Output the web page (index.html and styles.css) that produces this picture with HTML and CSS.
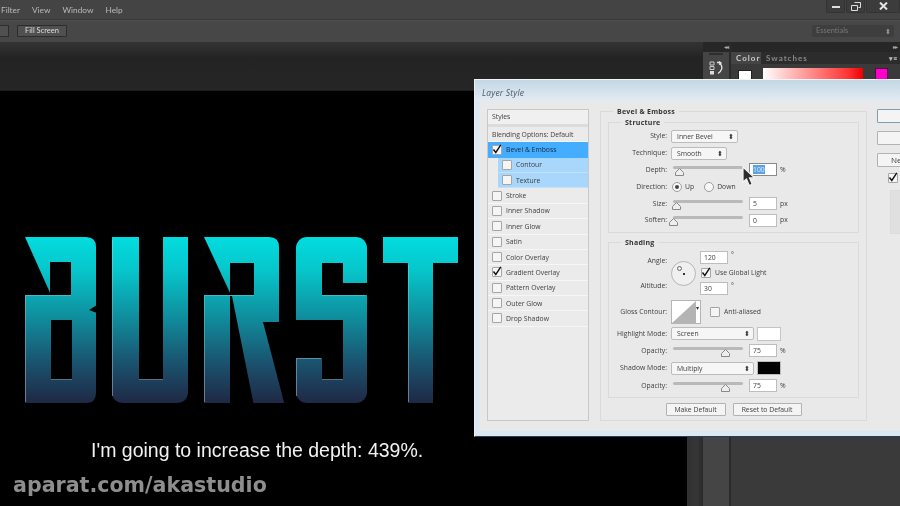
FILE: index.html
```html
<!DOCTYPE html>
<html lang="en">
<head>
<meta charset="utf-8">
<title>Layer Style</title>
<link rel="stylesheet" href="styles.css">
</head>
<body>
<div class="app">
  <header class="menubar">
    <nav class="menus"><span>Filter</span><span>View</span><span>Window</span><span>Help</span></nav>
    <div class="winctl">
      <span class="winbtn w-min"><svg width="8" height="3"><rect width="8" height="2" y="1" fill="#ddd"/></svg></span>
      <span class="winbtn w-res"><svg width="10" height="9" viewBox="0 0 10 9"><path d="M3.5.5h6v5h-2M.5 3.500h6v5h-6z" fill="none" stroke="#ddd"/></svg></span>
      <span class="winbtn w-close"><svg width="9" height="8" viewBox="0 0 9 8"><path d="M1 .5l7 7M8 .5l-7 7" stroke="#e4e4e4" stroke-width="2"/></svg></span>
    </div>
  </header>
  <div class="optionsbar">
    <span class="optbtn stub"></span>
    <span class="optbtn">Fill Screen</span>
    <span class="workspace-select">Essentials<i class="updown">⬍</i></span>
  </div>
  <div class="workspace">
    <div class="docarea">
      <div class="tabstrip"></div>
      <div class="canvasrow">
        <div class="canvas">
          <svg class="art" width="687" height="416" viewBox="0 91 687 416" aria-label="BURST">
            <defs>
              <linearGradient id="burstfill" gradientUnits="userSpaceOnUse" x1="0" y1="237" x2="0" y2="403">
                <stop offset="0" stop-color="#03dcdf"/>
                <stop offset=".2" stop-color="#06c6cb"/>
                <stop offset=".5" stop-color="#108a9a"/>
                <stop offset=".75" stop-color="#1a5470"/>
                <stop offset="1" stop-color="#1f2845"/>
              </linearGradient>
              <linearGradient id="edge" gradientUnits="userSpaceOnUse" x1="0" y1="237" x2="0" y2="403">
                <stop offset="0" stop-color="#5fe8ea"/>
                <stop offset=".5" stop-color="#5fb0bc"/>
                <stop offset="1" stop-color="#8f9bb0"/>
              </linearGradient>
              <clipPath id="clip-b"><path d="M25 237H86Q96 237 96 247V393Q96 403 86 403H25Z"/></clipPath>
              <clipPath id="clip-u"><path d="M112 237H188V391Q188 403 176 403H124Q112 403 112 391Z"/></clipPath>
              <clipPath id="clip-r"><path d="M204 237H269Q279 237 279 247V322H285V403H204Z"/></clipPath>
              <clipPath id="clip-s"><rect x="296" y="237" width="71" height="166" rx="11"/></clipPath>
              <clipPath id="clip-t"><rect x="383" y="237" width="75" height="166"/></clipPath>
            </defs>
            <g class="burst">
              <g clip-path="url(#clip-b)"><text x="42" y="390" transform="scale(.6 1)">B</text></g>
              <g clip-path="url(#clip-u)"><text x="187" y="390" transform="scale(.6 1)">U</text></g>
              <g clip-path="url(#clip-r)"><text x="340" y="390" transform="scale(.6 1)">R</text></g>
              <g clip-path="url(#clip-s)"><text x="493" y="390" transform="scale(.6 1)">S</text></g>
              <g clip-path="url(#clip-t)"><text x="638" y="390" transform="scale(.6 1)">T</text></g>
            </g>
            <g class="cuts">
              <polygon points="20,232 25,237 51,295 20,295"/>
              <rect x="50" y="262" width="21" height="33"/>
              <rect x="51" y="320" width="21" height="60"/>
              <polygon points="89,310 97,305 97,313"/>
              <rect x="139" y="230" width="24" height="150"/>
              <polygon points="199,232 204,237 231,295 199,295"/>
              <rect x="230" y="263" width="24" height="32"/>
              <polygon points="230,296 232,296 254,406 230,406"/>
              <polygon points="263,322 290,322 290,406 285,406"/>
              <rect x="322" y="263" width="21" height="32"/>
              <rect x="322" y="283" width="46" height="12"/>
              <rect x="295" y="320" width="48" height="38"/>
              <rect x="322" y="358" width="21" height="22"/>
              <rect x="382" y="263" width="26" height="142"/>
              <rect x="433" y="263" width="26" height="142"/>
            </g>
            <g class="edges">
              <path d="M25.500 296V402M112.500 240V396M204.500 296V402M296.500 358V396M408.500 265V402"/>
              <path d="M25 295.500H71M51 379.500H72M139 379.500H163M204 295.500H254M322 295.500H365M322 379.500H343M297 358.500H321"/>
            </g>
          </svg>
          <p class="subtitle">I'm going to increase the depth: 439%.</p>
          <p class="watermark">aparat.com/akastudio</p>
        </div>
        <div class="gutter"></div>
      </div>
    </div>
    <aside class="dock">
      <div class="collapse"><span class="chev">◂◂</span></div>
      <div class="dockbody">
        <div class="dockgrip"></div>
        <svg class="dockicon" width="15" height="14" viewBox="0 0 15 14"><path d="M1 1h4v3H1zM1 5.500h4v3H1z" fill="none" stroke="#ccc"/><rect x="1" y="10" width="4" height="3.500" fill="#ddd"/><path d="M8 1.500h3.500M10 .5l2 1.500-2 1.500M11.500 3c2.500 3 1.500 7-2.500 9.500" fill="none" stroke="#e5e5e5" stroke-width="1.300"/></svg>
      </div>
    </aside>
    <aside class="panels">
      <div class="collapse right"><span class="chev">▸▸</span></div>
      <div class="panel">
        <div class="paneltabs"><span class="tab on">Color</span><span class="tab">Swatches</span><span class="panelmenu">▾≡</span></div>
        <div class="colorrow">
          <span class="fgswatch"></span>
          <span class="spectrum"></span>
          <span class="magenta"></span>
        </div>
      </div>
    </aside>
  </div>
</div>

<section class="dialog">
  <h1 class="dtitle">Layer Style</h1>
  <div class="dbody">
    <div class="styles">
      <div class="shead">Styles</div>
      <div class="srow blend">Blending Options: Default</div>
      <div class="srow active"><span class="cb checked"><svg width="10" height="10" viewBox="0 0 10 10"><path d="M1.500 5.500l2.300 3L8.800.8" fill="none" stroke="#111" stroke-width="1.400"/></svg></span>Bevel &amp; Emboss</div>
      <div class="srow sub"><span class="cb"></span>Contour</div>
      <div class="srow sub"><span class="cb"></span>Texture</div>
      <div class="srow"><span class="cb"></span>Stroke</div>
      <div class="srow"><span class="cb"></span>Inner Shadow</div>
      <div class="srow"><span class="cb"></span>Inner Glow</div>
      <div class="srow"><span class="cb"></span>Satin</div>
      <div class="srow"><span class="cb"></span>Color Overlay</div>
      <div class="srow"><span class="cb checked"><svg width="10" height="10" viewBox="0 0 10 10"><path d="M1.500 5.500l2.300 3L8.800.8" fill="none" stroke="#111" stroke-width="1.400"/></svg></span>Gradient Overlay</div>
      <div class="srow"><span class="cb"></span>Pattern Overlay</div>
      <div class="srow"><span class="cb"></span>Outer Glow</div>
      <div class="srow"><span class="cb"></span>Drop Shadow</div>
    </div>

    <div class="options">
      <div class="group outer">
        <div class="legend">Bevel &amp; Emboss</div>
        <div class="group inner structure">
          <div class="legend sm">Structure</div>
          <div class="form">
            <label>Style:</label><div class="ctl"><span class="select w67">Inner Bevel<i>⬍</i></span></div>
            <label>Technique:</label><div class="ctl"><span class="select w56">Smooth<i>⬍</i></span></div>
            <label>Depth:</label><div class="ctl"><span class="slider"><svg class="thumb t-depth" width="9" height="8" viewBox="0 0 9 8"><path d="M.5 7.500v-3l4-4 4 4v3z" fill="#eee" stroke="#888"/></svg></span><span class="input sel"><b>100</b></span><span class="unit">%</span></div>
            <label>Direction:</label><div class="ctl radios"><span class="radio on"></span><span class="rlabel">Up</span><span class="radio"></span><span class="rlabel">Down</span></div>
            <label>Size:</label><div class="ctl"><span class="slider"><svg class="thumb t-size" width="9" height="8" viewBox="0 0 9 8"><path d="M.5 7.500v-3l4-4 4 4v3z" fill="#eee" stroke="#888"/></svg></span><span class="input">5</span><span class="unit">px</span></div>
            <label>Soften:</label><div class="ctl"><span class="slider"><svg class="thumb t-soft" width="9" height="8" viewBox="0 0 9 8"><path d="M.5 7.500v-3l4-4 4 4v3z" fill="#eee" stroke="#888"/></svg></span><span class="input">0</span><span class="unit">px</span></div>
          </div>
          <svg class="cursor" width="16" height="21" viewBox="0 0 16 21"><path d="M1 1v15l3.500-3 2.700 6.500 3-1.300-2.700-6.300h5z" fill="#2c2c2c" stroke="#f4f4f4" stroke-width="1.200"/></svg>
        </div>
        <div class="group inner shading">
          <div class="legend sm">Shading</div>
          <div class="anglerow">
            <div class="anglelabels"><label>Angle:</label><label>Altitude:</label></div>
            <div class="dial"><i class="dot"></i><i class="light"></i></div>
            <div class="anglectl">
              <div class="ctl"><span class="input">120</span><span class="unit deg">°</span></div>
              <div class="ctl"><span class="cb checked"><svg width="10" height="10" viewBox="0 0 10 10"><path d="M1.500 5.500l2.300 3L8.800.8" fill="none" stroke="#111" stroke-width="1.400"/></svg></span><span class="cbtext">Use Global Light</span></div>
              <div class="ctl"><span class="input">30</span><span class="unit deg">°</span></div>
            </div>
          </div>
          <div class="glossrow">
            <label>Gloss Contour:</label>
            <span class="contour"><svg width="24" height="22" viewBox="0 0 24 22"><polygon points="0,22 24,0 24,22" fill="#b4b4b4"/></svg><i>▾</i></span>
            <span class="cb"></span><span class="cbtext">Anti-aliased</span>
          </div>
          <div class="form modes">
            <label>Highlight Mode:</label><div class="ctl"><span class="select w83">Screen<i>⬍</i></span><span class="swatch white"></span></div>
            <label>Opacity:</label><div class="ctl"><span class="slider"><svg class="thumb t-op" width="9" height="8" viewBox="0 0 9 8"><path d="M.5 7.500v-3l4-4 4 4v3z" fill="#eee" stroke="#888"/></svg></span><span class="input">75</span><span class="unit">%</span></div>
            <label>Shadow Mode:</label><div class="ctl"><span class="select w83">Multiply<i>⬍</i></span><span class="swatch black"></span></div>
            <label>Opacity:</label><div class="ctl"><span class="slider"><svg class="thumb t-op" width="9" height="8" viewBox="0 0 9 8"><path d="M.5 7.500v-3l4-4 4 4v3z" fill="#eee" stroke="#888"/></svg></span><span class="input">75</span><span class="unit">%</span></div>
          </div>
        </div>
        <div class="defaults"><span class="btn mk">Make Default</span><span class="btn rs">Reset to Default</span></div>
      </div>
    </div>

    <div class="actions">
      <span class="btn side primary"></span>
      <span class="btn side"></span>
      <span class="btn side new">New Style...</span>
      <div class="preview"><span class="cb checked"><svg width="10" height="10" viewBox="0 0 10 10"><path d="M1.500 5.500l2.300 3L8.800.8" fill="none" stroke="#111" stroke-width="1.400"/></svg></span></div>
      <div class="thumbbox"></div>
    </div>
  </div>
</section>
</body>
</html>
```
FILE: styles.css
```css
* { box-sizing: border-box; margin: 0; padding: 0; }
html, body { width: 900px; height: 506px; overflow: hidden; background: #000; }
body { position: relative; font-family: "Lato", "Liberation Sans", sans-serif; }

.app { display: flex; flex-direction: column; width: 900px; height: 506px; }

/* top bars */
.menubar { flex: 0 0 20px; display: flex; justify-content: space-between; background: #444; border-bottom: 1px solid #383838; }
.menus { display: flex; gap: 12px; padding: 3px 0 0 1px; font-size: 8.300px; color: #b9b9b9; line-height: 14px; filter: blur(.3px); }
.winctl { display: flex; gap: 1px; height: 13px; margin-right: 0; }
.winbtn { display: flex; align-items: center; justify-content: center; background: #3c3c3c; border: 1px solid #333; border-top: 0; border-radius: 0 0 2px 2px; }
.w-min { width: 19px; }
.w-res { width: 19px; }
.w-close { width: 34px; }
.optionsbar { flex: 0 0 22px; display: flex; align-items: center; gap: 8px; padding-bottom: 2px; background: #474747; border-top: 1px solid #4f4f4f; position: relative; }
.optbtn { width: 50px; height: 12px; font-size: 7.500px; line-height: 10px; text-align: center; color: #ddd; background: #505050; border: 1px solid #2c2c2c; border-radius: 1px; filter: blur(.25px); }
.optbtn.stub { width: 9px; border-left: 0; }
.workspace-select { margin-left: auto; margin-right: 6px; width: 82px; height: 12px; padding-left: 4px; display: flex; justify-content: space-between; font-size: 7.500px; line-height: 12px; color: #777; background: #3e3e3e; border-radius: 2px; filter: blur(.3px); }
.updown { font-style: normal; font-size: 7px; margin-right: 3px; color: #999; }

/* workspace */
.workspace { flex: 1; display: flex; min-height: 0; }
.docarea { width: 703px; display: flex; flex-direction: column; }
.tabstrip { flex: 0 0 49px; background: linear-gradient(#333 0, #2a2a2a 10px, #232323 16px, #262626 100%); border-bottom: 1px solid #1c1c1c; }
.canvasrow { flex: 1; display: flex; min-height: 0; }
.canvas { position: relative; width: 687px; background: #000; }
.gutter { flex: 1; background: linear-gradient(90deg, #303030, #363636 60%, #2a2a2a); }
.art { display: block; position: absolute; left: 0; top: 0; filter: blur(.35px); }
.burst text { font-family: "Inter", "Liberation Sans", sans-serif; font-weight: 900; font-size: 180px; fill: url(#burstfill); stroke: url(#burstfill); stroke-width: 100px; stroke-linejoin: round; }
.cuts polygon, .cuts rect { fill: #000; }
.edges path { fill: none; stroke: url(#edge); stroke-width: 1px; opacity: .7; }
.subtitle { position: absolute; left: 91px; top: 348px; font: 19.500px/22px "Liberation Sans", sans-serif; color: #f2f2f2; white-space: nowrap; filter: blur(.25px); }
.watermark { position: absolute; left: 13px; top: 382px; font: bold 20.600px/24px "DejaVu Sans", sans-serif; color: #8e8e8e; white-space: nowrap; filter: blur(.3px); }

.dock { width: 28px; display: flex; flex-direction: column; background: #454545; border-right: 2px solid #2b2b2b; }
.collapse { flex: 0 0 10px; background: #272727; display: flex; justify-content: flex-end; align-items: center; padding: 0 1px; }
.chev { font-size: 6px; line-height: 8px; letter-spacing: -1px; color: #aaa; }
.dockbody { flex: 1; display: flex; flex-direction: column; align-items: center; padding-top: 1px; gap: 6px; }
.dockgrip { width: 14px; height: 2px; background: #2e2e2e; }
.panels { flex: 1; display: flex; flex-direction: column; background: #3a3a3a; }
.collapse.right { padding-right: 3px; }
.panel { flex: 1; }
.paneltabs { height: 12px; display: flex; align-items: center; background: #2c2c2c; font-size: 8px; font-weight: 700; letter-spacing: 1px; color: #888; position: relative; filter: blur(.25px); }
.tab { padding: 0 3px 0 5px; line-height: 12px; }
.tab.on { background: #444; color: #ccc; width: 30px; }
.panelmenu { margin-left: auto; margin-right: 3px; font-size: 7px; letter-spacing: 0; color: #bbb; }
.colorrow { display: flex; align-items: flex-start; padding: 4px 0 0 7px; }
.fgswatch { width: 14px; height: 12px; margin-top: 2px; background: #fff; border: 1px solid #222; }
.spectrum { width: 100px; height: 14px; margin-left: 11px; background: linear-gradient(90deg, #fff, #f33 85%, #e00); }
.magenta { width: 13px; height: 14px; margin-left: 12px; background: #f0c; border: 1px solid #5a0a3e; }

/* dialog */
.dialog { position: absolute; left: 474px; top: 79px; width: 426px; height: 358px; overflow: hidden; background: #dce9f5; border-top: 1px solid #f2f6f8; border-left: 1px solid #e8f0f5; border-bottom: 1px solid #24424f; font-family: "Open Sans", "Liberation Sans", sans-serif; color: #3e3e3e; font-size: 6.800px; }
.dtitle { height: 21px; padding: 7px 0 0 7px; font: italic 8.500px/11px "Open Sans", "Liberation Sans", sans-serif; color: #4a5a68; background: linear-gradient(#c3d7e5, #e2ebf2); letter-spacing: .2px; filter: blur(.2px); }
.dbody { display: flex; height: 330px; margin-left: 5px; padding: 8px 0 0 7px; background: #e9e9e9; filter: blur(.25px); }

/* styles list */
.styles { width: 102px; height: 312px; flex: none; background: #ebebeb; border: 1px solid #c8c8c8; }
.shead { height: 17px; padding-left: 4px; line-height: 14px; background: #f0f0f0; border-bottom: 3px solid #dcdcdc; }
.srow { height: 15.360px; display: flex; align-items: center; gap: 4px; padding-left: 4px; line-height: 11px; border-bottom: 1px solid #f6f6f6; white-space: nowrap; }
.srow.active { background: #45adff; color: #1c2a38; border-bottom-color: #45adff; }
.srow.sub { margin-left: 10px; padding-left: 4px; background: #a9d6fb; border-bottom-color: #c2e2fb; }
.cb { flex: none; display: inline-block; width: 10px; height: 10px; background: #f5f5f5; border: 1px solid #a5a5a5; border-radius: 1px; position: relative; }
.cb svg { position: absolute; left: -1px; top: -2px; }

/* options */
.options { width: 267px; margin-left: 11px; flex: none; }
.group { border: 1px solid #dadada; }
.outer { height: 310px; margin-top: 2px; padding: 0 7px; }
.legend { width: fit-content; margin: -6px 0 0 5px; padding: 0 4px; background: #e9e9e9; font-weight: 700; font-size: 7px; line-height: 11px; color: #333; letter-spacing: .25px; }
.inner { position: relative; }
.legend.sm { margin-left: 12px; }
.structure { height: 111px; margin-top: 5px; }
.shading { height: 156px; margin-top: 9px; }
.form { display: grid; grid-template-columns: 58px 1fr; grid-auto-rows: 16.800px; column-gap: 4px; align-items: center; }
.form label, .anglelabels label, .glossrow label { text-align: right; line-height: 10px; }
.ctl { display: flex; align-items: center; }
.select { display: flex; justify-content: space-between; height: 13px; padding: 0 3px 0 5px; background: #f6f6f6; border: 1px solid #bcbcbc; border-radius: 2px; line-height: 11px; }
.select i { font-style: normal; font-size: 7px; color: #333; }
.w67 { width: 67px; }
.w56 { width: 56px; }
.w83 { width: 83px; }
.slider { position: relative; width: 70px; height: 3px; margin: -5px 6px 0 2px; background: #b9b9b9; border-radius: 2px; }
.thumb { position: absolute; top: 2px; }
.t-depth { left: 2px; }
.t-size { left: -1px; }
.t-soft { left: -4px; }
.t-op { left: 48px; }
.input { display: block; width: 28px; height: 13px; padding-left: 3px; background: #fff; border: 1px solid #bdbdbd; line-height: 11px; }
.input b { font-weight: 400; background: #5aa2e6; color: #dcecf8; }
.input.sel { border-color: #8a8a8a; }
.unit { margin-left: 3px; line-height: 10px; }
.deg { margin-top: -5px; }
.radio { width: 10px; height: 10px; background: #f8f8f8; border: 1px solid #9c9c9c; border-radius: 50%; position: relative; }
.radio.on::after { content: ""; position: absolute; left: 2px; top: 2px; width: 4px; height: 4px; border-radius: 50%; background: #444; }
.radios .radio:first-child { margin-left: 1px; }
.rlabel { margin: 0 10px 0 3px; line-height: 10px; }
.cursor { position: absolute; left: 133px; top: 43px; }

.anglerow { display: grid; grid-template-columns: 58px 25px auto; column-gap: 4px; align-items: center; height: 50px; }
.anglelabels { display: flex; flex-direction: column; gap: 15px; }
.dial { position: relative; width: 25px; height: 25px; border-radius: 50%; background: #f0f0f0; border: 1px solid #b5b5b5; }
.dot { position: absolute; left: 11px; top: 11px; width: 2px; height: 2px; background: #333; }
.light { position: absolute; left: 5px; top: 4px; width: 5px; height: 5px; border-radius: 50%; border: 1px solid #666; }
.anglectl { display: flex; flex-direction: column; gap: 4px; }
.anglectl .cb { margin: 0 4px 0 1px; }
.cbtext { line-height: 10px; }
.glossrow { display: grid; grid-template-columns: 58px 29px 10px auto; column-gap: 4px; align-items: center; height: 24px; margin-top: 2px; }
.glossrow .cb { margin-left: 6px; }
.glossrow .cbtext { margin-left: 6px; }
.contour { display: flex; width: 30px; height: 24px; background: #fff; border: 1px solid #b5b5b5; }
.contour svg { display: block; }
.contour i { font-style: normal; font-size: 6px; line-height: 14px; color: #333; }
.modes { grid-auto-rows: 17.300px; margin-top: 1px; }
.swatch { width: 24px; height: 14px; margin-left: 3px; border: 1px solid #c4c4c4; }
.white { background: #fff; }
.black { background: #000; border-color: #bbb; }

.defaults { display: flex; justify-content: center; gap: 7px; margin-top: 5px; }
.btn { display: block; height: 13px; line-height: 11px; text-align: center; background: #f4f4f4; border: 1px solid #b2b2b2; border-radius: 1px; white-space: nowrap; }
.mk { width: 60px; }
.rs { width: 69px; }

.actions { margin-left: 10px; flex: 1; display: flex; flex-direction: column; }
.side { width: 80px; height: 14px; margin-bottom: 8px; }
.primary { border-color: #7f9db0; border-width: 1.500px; }
.new { padding-left: 13px; text-align: left; font-size: 8px; margin-bottom: 6px; }
.preview { height: 10px; padding-left: 11px; }
.thumbbox { width: 60px; height: 44px; margin: 7px 0 0 13px; background: #e0e0e0; border: 1px solid #dcdcdc; }
```
